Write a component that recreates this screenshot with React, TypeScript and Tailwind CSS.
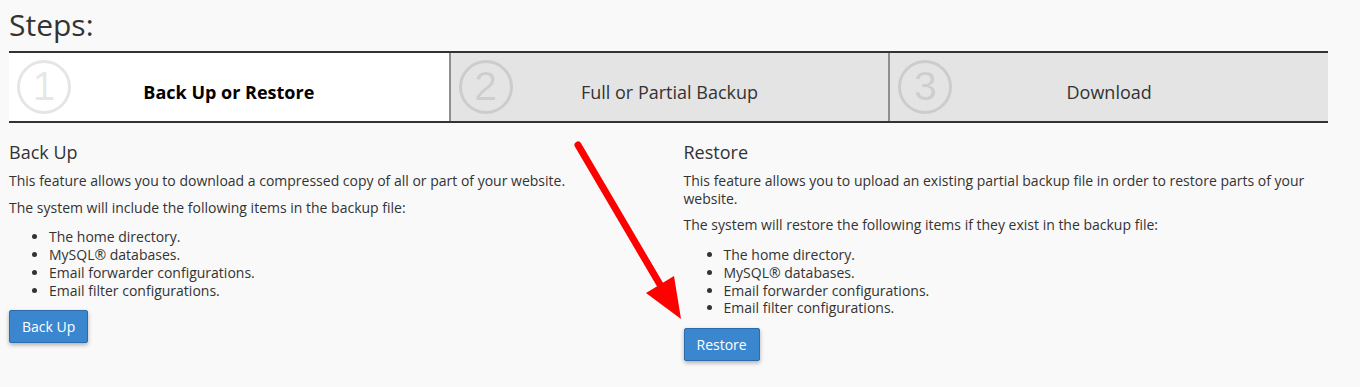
import React from 'react'

const steps = [
  { n: '1', label: 'Back Up or Restore', active: true },
  { n: '2', label: 'Full or Partial Backup', active: false },
  { n: '3', label: 'Download', active: false },
]

const items = [
  'The home directory.',
  'MySQL® databases.',
  'Email forwarder configurations.',
  'Email filter configurations.',
]

function ItemList() {
  return (
    <ul className="mt-[12px] list-disc pl-[40px] marker:text-[#333]">
      {items.map((it) => (
        <li key={it} className="leading-[17.7px]">
          {it}
        </li>
      ))}
    </ul>
  )
}

function BlueButton({ children }: { children: React.ReactNode }) {
  return (
    <button className="h-[33px] rounded-[2px] border border-[#2c6cab] bg-[#3a87cf] px-[12px] text-[14px] text-white shadow-[0_2px_4px_rgba(0,0,0,0.3)]">
      {children}
    </button>
  )
}

export default function App() {
  return (
    <main
      className="relative min-h-[387px] bg-[#f9f9f9] pl-[9px] pr-[32px] pt-[8px] text-[14px] text-[#333]"
      style={{ fontFamily: '"Open Sans", "Liberation Sans", sans-serif' }}
    >
      {/* Title */}
      <h1 className="text-[30px] leading-[33px]">Steps:</h1>

      {/* Steps bar */}
      <div className="mt-[10px] grid grid-cols-3 border-y-2 border-[#333]">
        {steps.map((s, i) => (
          <div
            key={s.n}
            className={`relative flex h-[68px] items-center justify-center pt-[11px] ${
              s.active ? 'bg-white' : 'bg-[#e4e4e4]'
            } ${i > 0 ? 'border-l-2 border-[#8f8f8f]' : ''}`}
          >
            <span
              className="absolute left-[8px] top-[7px] flex h-[54px] w-[54px] items-center justify-center rounded-full border-[3px] border-black/10 text-[41px] text-black/10"
              style={{ fontFamily: '"Liberation Sans", Arial, sans-serif' }}
            >
              {s.n}
            </span>
            <span className={`text-[18px] ${s.active ? 'font-bold text-black' : ''}`}>{s.label}</span>
          </div>
        ))}
      </div>

      {/* Columns */}
      <div className="mt-[19px] grid grid-cols-2 gap-[30px]">
        <section>
          <h2 className="text-[18px] leading-[20px]">Back Up</h2>
          <p className="mt-[10px] leading-[17.7px]">
            This feature allows you to download a compressed copy of all or part of your website.
          </p>
          <p className="mt-[9px] leading-[17.7px]">
            The system will include the following items in the backup file:
          </p>
          <ItemList />
          <div className="mt-[11px]">
            <BlueButton>Back Up</BlueButton>
          </div>
        </section>
        <section>
          <h2 className="text-[18px] leading-[20px]">Restore</h2>
          <p className="mt-[10px] leading-[17.7px]">
            This feature allows you to upload an existing partial backup file in order to restore parts of your
            website.
          </p>
          <p className="mt-[9px] leading-[17.7px]">
            The system will restore the following items if they exist in the backup file:
          </p>
          <ItemList />
          <div className="mt-[11px]">
            <BlueButton>Restore</BlueButton>
          </div>
        </section>
      </div>

      {/* Annotation arrow */}
      <svg className="pointer-events-none absolute left-0 top-0" width="1360" height="387">
        <line x1="578" y1="145" x2="662" y2="288" stroke="#ff0000" strokeWidth="7" strokeLinecap="round" />
        <polygon points="646,293 674,276 681,319" fill="#ff0000" />
      </svg>
    </main>
  )
}
